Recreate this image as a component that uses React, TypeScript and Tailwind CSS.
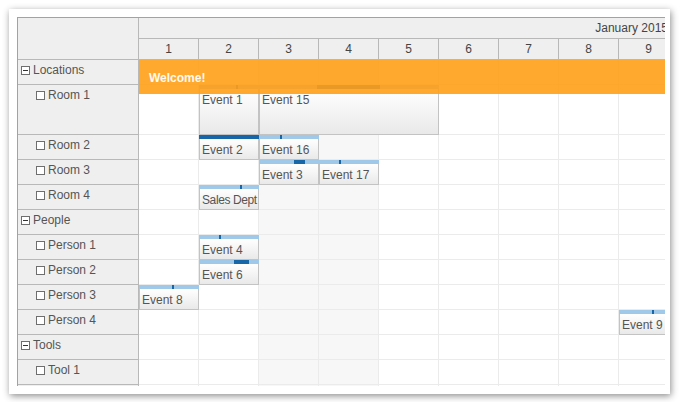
import React from "react";

type Row = { id: string; name: string; group?: boolean; height: number };
type Ev = { row: string; text: string; day: number; span: number; markLeft: number; markWidth: number };

const DAYS = [1, 2, 3, 4, 5, 6, 7, 8, 9];
const WEEKEND = [3, 4];
const COL_W = 60;

const ROWS: Row[] = [
  { id: "loc", name: "Locations", group: true, height: 25 },
  { id: "r1", name: "Room 1", height: 50 },
  { id: "r2", name: "Room 2", height: 25 },
  { id: "r3", name: "Room 3", height: 25 },
  { id: "r4", name: "Room 4", height: 25 },
  { id: "ppl", name: "People", group: true, height: 25 },
  { id: "p1", name: "Person 1", height: 25 },
  { id: "p2", name: "Person 2", height: 25 },
  { id: "p3", name: "Person 3", height: 25 },
  { id: "p4", name: "Person 4", height: 25 },
  { id: "tools", name: "Tools", group: true, height: 25 },
  { id: "t1", name: "Tool 1", height: 25 },
  { id: "t2", name: "", height: 25 },
];

const EVENTS: Ev[] = [
  { row: "r1", text: "Event 1", day: 2, span: 1, markLeft: 37, markWidth: 2 },
  { row: "r1", text: "Event 15", day: 3, span: 3, markLeft: 58, markWidth: 63 },
  { row: "r2", text: "Event 2", day: 2, span: 1, markLeft: 0, markWidth: 60 },
  { row: "r2", text: "Event 16", day: 3, span: 1, markLeft: 21, markWidth: 2 },
  { row: "r3", text: "Event 3", day: 3, span: 1, markLeft: 35, markWidth: 11 },
  { row: "r3", text: "Event 17", day: 4, span: 1, markLeft: 20, markWidth: 2 },
  { row: "r4", text: "Sales Dept", day: 2, span: 1, markLeft: 41, markWidth: 2 },
  { row: "p1", text: "Event 4", day: 2, span: 1, markLeft: 20, markWidth: 2 },
  { row: "p2", text: "Event 6", day: 2, span: 1, markLeft: 35, markWidth: 15 },
  { row: "p3", text: "Event 8", day: 1, span: 1, markLeft: 33, markWidth: 2 },
  { row: "p4", text: "Event 9", day: 9, span: 1, markLeft: 33, markWidth: 2 },
];

const EventBox: React.FC<{ ev: Ev; height: number }> = ({ ev, height }) => (
  <div
    className="absolute top-0 flex flex-col z-10"
    style={{ left: (ev.day - 1) * COL_W, width: ev.span * COL_W, height }}
  >
    <div className="relative h-[4px] bg-[#9fc8e9] shrink-0">
      <div
        className="absolute top-0 h-[4px] bg-[#1766a7]"
        style={{ left: ev.markLeft, width: ev.markWidth }}
      />
    </div>
    <div
      className={`flex-1 border border-t-0 border-[#c3c3c3] bg-gradient-to-b from-white to-[#e9e9e9] px-[2px] pt-[3px] leading-[16px] text-[#555] whitespace-nowrap overflow-hidden ${
        ev.text.length > 8 ? "tracking-[-0.4px]" : "tracking-normal"
      }`}
    >
      {ev.text}
    </div>
  </div>
);

const RowHeader: React.FC<{ row: Row }> = ({ row }) => (
  <div
    className="w-[121px] shrink-0 border-r border-b border-[#b8b8b8] bg-[#efefef] text-[#555] leading-[16px] pt-[2px]"
    style={{ height: row.height }}
  >
    {row.name === "" ? null : row.group ? (
      <div className="flex items-center pl-[3px]">
        <span className="w-[9px] h-[9px] border border-[#6e6e6e] bg-white flex items-center justify-center">
          <span className="w-[5px] h-px bg-[#333]" />
        </span>
        <span className="ml-[3px]">{row.name}</span>
      </div>
    ) : (
      <div className="flex items-center pl-[18px]">
        <span className="w-[9px] h-[9px] border border-[#6e6e6e] bg-white" />
        <span className="ml-[3px]">{row.name}</span>
      </div>
    )}
  </div>
);

export default function App() {
  return (
    <div className="min-h-screen bg-white p-[9px] font-['Liberation_Sans',Arial,sans-serif] text-[12px]">
      <div className="w-[661px] h-[385px] bg-white pl-[8px] pt-[8px] pr-[5px] pb-[8px] shadow-[1px_2px_7px_rgba(0,0,0,0.45)]">
        <div className="h-[369px] overflow-hidden border-l border-t border-[#a2a2a2] flex flex-col">
          {/* header */}
          <div className="flex shrink-0">
            <div className="w-[121px] h-[42px] shrink-0 border-r border-b border-[#b8b8b8] bg-[#efefef]" />
            <div className="flex flex-col shrink-0 bg-[#efefef] text-[#444]">
              <div className="h-[21px] border-b border-[#b8b8b8] flex items-center justify-end pr-[11px]" style={{ width: DAYS.length * COL_W }}>
                January 2015
              </div>
              <div className="flex h-[21px]">
                {DAYS.map((d) => (
                  <div key={d} className="w-[60px] shrink-0 border-r border-b border-[#b8b8b8] flex items-center justify-center">
                    {d}
                  </div>
                ))}
              </div>
            </div>
          </div>

          {/* body */}
          <div className="relative flex flex-col">
            {ROWS.map((row) => (
              <div key={row.id} className="flex shrink-0">
                <RowHeader row={row} />
                <div className="relative flex shrink-0" style={{ height: row.height }}>
                  {DAYS.map((d) => (
                    <div
                      key={d}
                      className={`w-[60px] h-full shrink-0 border-r border-b border-[#ebebeb] ${
                        WEEKEND.includes(d) ? "bg-[#f7f7f7]" : "bg-white"
                      }`}
                    />
                  ))}
                  {EVENTS.filter((e) => e.row === row.id).map((ev) => (
                    <EventBox key={ev.text} ev={ev} height={row.height} />
                  ))}
                </div>
              </div>
            ))}

            <div className="absolute top-0 left-[121px] w-[540px] h-[34px] bg-[#ff9f18]/90 z-20 pl-[10px] pt-[11px] leading-[14px] font-bold text-[#fffaf0]">
              Welcome!
            </div>
          </div>
        </div>
      </div>
    </div>
  );
}
